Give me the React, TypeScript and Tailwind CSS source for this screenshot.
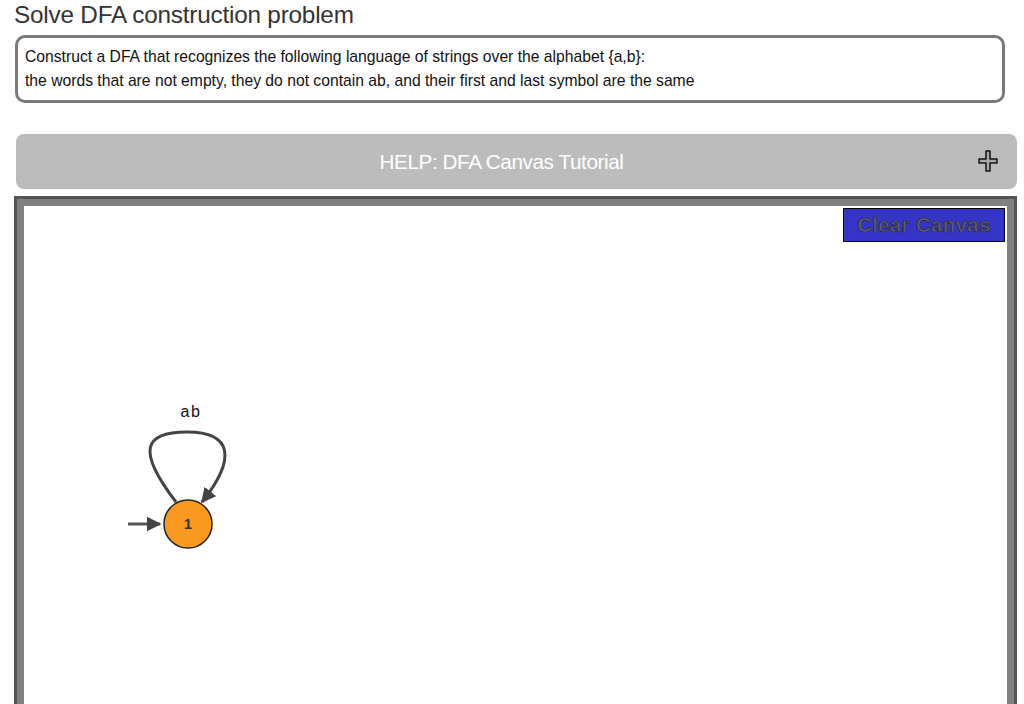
import React from 'react';

const PlusIcon = () => (
  <svg width="22" height="24" viewBox="0 0 22 24">
    <path
      d="M9 2 H13 V10 H20 V14 H13 V22 H9 V14 H2 V10 H9 Z"
      fill="#a9a9a9"
      stroke="#111"
      strokeWidth="1.5"
      strokeLinejoin="round"
    />
  </svg>
);

// single state with self loop on a free canvas
const DfaDrawing = () => (
  <>
    <svg className="absolute inset-0" width="100%" height="100%">
      <defs>
        <marker
          id="arrow"
          viewBox="0 0 10 10"
          refX="9"
          refY="5"
          markerWidth="5"
          markerHeight="5"
          orient="auto"
        >
          <path d="M0 0 L10 5 L0 10 Z" fill="#444" />
        </marker>
      </defs>
      <line
        x1="104"
        y1="318"
        x2="136"
        y2="318"
        stroke="#555"
        strokeWidth="3"
        markerEnd="url(#arrow)"
      />
      <path
        d="M152 296 C 112 244, 120 226, 163 226 C 208 226, 213 252, 178 296"
        fill="none"
        stroke="#444"
        strokeWidth="3"
        markerEnd="url(#arrow)"
      />
      <circle cx="164" cy="318" r="24" fill="#fb9a1f" stroke="#222" strokeWidth="1.5" />
    </svg>
    <span className="absolute left-[147px] top-[196px] w-[40px] text-center text-[16px] leading-[20px] tracking-[1.5px] text-[#111]">
      ab
    </span>
    <span className="absolute left-[144px] top-[308px] w-[40px] text-center text-[15px] font-bold leading-[20px] text-[#333]">
      1
    </span>
  </>
);

export default function App() {
  return (
    <div className="w-[1024px] h-[704px] overflow-hidden bg-white font-['Liberation_Sans',Arial,sans-serif] text-[#222] flex flex-col pl-[14px] pt-[1px]">
      <h1 className="shrink-0 text-[24.3px] leading-[28px] text-[#333] tracking-[-0.2px]">
        Solve DFA construction problem
      </h1>
      <div className="shrink-0 ml-[1px] mt-[6px] w-[990px] h-[68px] rounded-[10px] border-[3px] border-[#7a7a7a] px-[7px] pt-[7px] text-[15.7px] leading-[24px] text-[#111]">
        <p>Construct a DFA that recognizes the following language of strings over the alphabet {'{a,b}'}:</p>
        <p>the words that are not empty, they do not contain ab, and their first and last symbol are the same</p>
      </div>
      <div className="shrink-0 ml-[2px] mt-[31px] w-[1001px] h-[55px] rounded-[8px] bg-[#bcbcbc] relative flex items-center justify-center pr-[30px]">
        <span className="text-white text-[20.7px] tracking-[-0.4px]">HELP: DFA Canvas Tutorial</span>
        <div className="absolute right-[18px] top-[15px]">
          <PlusIcon />
        </div>
      </div>
      <div className="shrink-0 mt-[7px] w-[1003px] h-[520px] border-[3px] border-b-0 border-[#555]">
        <div className="w-full h-full border-[7px] border-b-0 border-[#808080] bg-white relative">
          <DfaDrawing />
          <button className="absolute right-[2px] top-[2px] w-[162px] h-[34px] bg-[#3434c8] border border-black text-[20.5px] font-bold text-[#5c5c78] [-webkit-text-stroke:0.7px_#2a2a2a] tracking-[0.3px]">
            Clear Canvas
          </button>
        </div>
      </div>
    </div>
  );
}
